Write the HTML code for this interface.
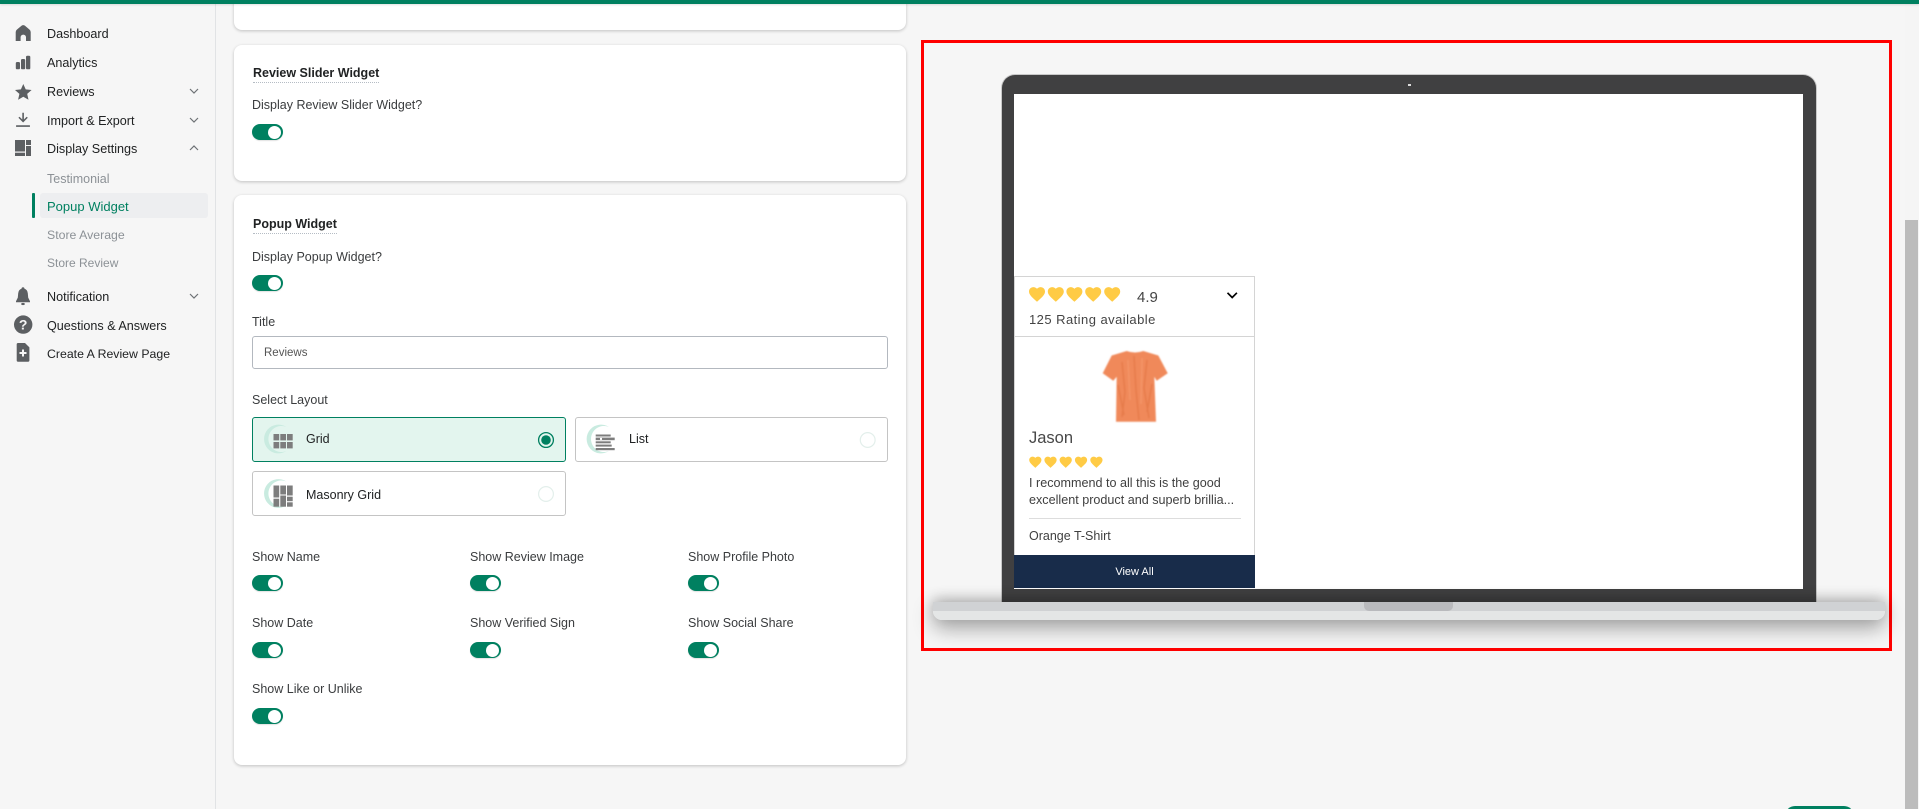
<!DOCTYPE html>
<html><head><meta charset="utf-8"><title>Popup Widget</title>
<style>
html,body{margin:0;padding:0;width:1919px;height:809px;overflow:hidden;background:#f6f6f6;font-family:"Liberation Sans",sans-serif;font-size:13px;color:#202223}
#w{position:relative;width:1919px;height:809px;overflow:hidden;background:#f6f6f6}
.a{position:absolute}
.t{position:absolute;white-space:nowrap;line-height:16px}
.n{left:47px;color:#202223;font-size:12.6px}
.s{left:47px;color:#8c9196}
.card{position:absolute;left:234px;width:672px;background:#fff;border-radius:8px;box-shadow:0 1px 3px rgba(0,0,0,.22)}
.h{left:253px;font-weight:bold;font-size:12.5px;color:#202223;border-bottom:1px dotted #b5bcc4;line-height:15px;padding-bottom:1px}
.l{color:#3a3c3e;font-size:12.5px}
.tg{position:absolute;width:31px;height:16px;background:#008060;border-radius:8px;box-shadow:0 1px 1px rgba(0,0,0,.12)}
.tg:after{content:"";position:absolute;left:16px;top:1.5px;width:13px;height:13px;border-radius:50%;background:#fff}
.opt{position:absolute;box-sizing:border-box;height:45px;background:#fff;border:1px solid #c4c4c4;border-radius:3px}
</style></head><body><div id="w">

<div class="a" style="left:215px;top:0;width:1px;height:809px;background:#e1e3e5"></div>
<div class="a" style="left:40px;top:193px;width:168px;height:25px;background:#edeef0;border-radius:3px"></div>
<div class="a" style="left:32px;top:193px;width:3px;height:25px;background:#008060;border-radius:1px"></div>

<div class="t n" style="top:26px">Dashboard</div>
<div class="t n" style="top:55px">Analytics</div>
<div class="t n" style="top:84px">Reviews</div>
<div class="t n" style="top:113px">Import &amp; Export</div>
<div class="t n" style="top:141px">Display Settings</div>
<div class="t s" style="top:171px;font-size:12.5px">Testimonial</div>
<div class="t" style="left:47px;top:199px;color:#008060;font-size:13px">Popup Widget</div>
<div class="t s" style="top:227px;font-size:12.3px">Store Average</div>
<div class="t s" style="top:255px;font-size:12px">Store Review</div>
<div class="t n" style="top:289px">Notification</div>
<div class="t n" style="top:318px">Questions &amp; Answers</div>
<div class="t n" style="top:346px;font-size:12.3px">Create A Review Page</div>

<div class="card" style="top:-20px;height:50px"></div>
<div class="card" style="top:45px;height:136px"></div>
<div class="card" style="top:195px;height:570px"></div>

<div class="t h" style="top:66px">Review Slider Widget</div>
<div class="t l" style="left:252px;top:97px">Display Review Slider Widget?</div>
<div class="tg" style="left:252px;top:124px"></div>

<div class="t h" style="top:217px">Popup Widget</div>
<div class="t l" style="left:252px;top:249px">Display Popup Widget?</div>
<div class="tg" style="left:252px;top:275px"></div>

<div class="t l" style="left:252px;top:314px">Title</div>
<div class="a" style="left:252px;top:336px;width:636px;height:33px;box-sizing:border-box;border:1px solid #b3b8bf;border-radius:3px;background:#fff"></div>
<div class="t" style="left:264px;top:345px;font-size:11.5px;color:#555">Reviews</div>

<div class="t l" style="left:252px;top:392px">Select Layout</div>
<div class="opt" style="left:252px;top:417px;width:314px;background:#e3f5ee;border-color:#008060"></div>
<div class="opt" style="left:575px;top:417px;width:313px"></div>
<div class="opt" style="left:252px;top:471px;width:314px"></div>
<div class="t" style="left:306px;top:431px;font-size:12.5px">Grid</div>
<div class="t" style="left:629px;top:431px;font-size:12.5px">List</div>
<div class="t" style="left:306px;top:487px;font-size:12.5px">Masonry Grid</div>

<div class="t l" style="left:252px;top:549px">Show Name</div>
<div class="t l" style="left:470px;top:549px">Show Review Image</div>
<div class="t l" style="left:688px;top:549px">Show Profile Photo</div>
<div class="tg" style="left:252px;top:575px"></div>
<div class="tg" style="left:470px;top:575px"></div>
<div class="tg" style="left:688px;top:575px"></div>
<div class="t l" style="left:252px;top:615px">Show Date</div>
<div class="t l" style="left:470px;top:615px">Show Verified Sign</div>
<div class="t l" style="left:688px;top:615px">Show Social Share</div>
<div class="tg" style="left:252px;top:642px"></div>
<div class="tg" style="left:470px;top:642px"></div>
<div class="tg" style="left:688px;top:642px"></div>
<div class="t l" style="left:252px;top:681px">Show Like or Unlike</div>
<div class="tg" style="left:252px;top:708px"></div>

<!-- red box -->
<div class="a" style="left:921px;top:40px;width:971px;height:611px;box-sizing:border-box;border:3px solid #f00"></div>

<!-- laptop -->
<div class="a" style="left:1001px;top:74px;width:816px;height:528px;box-sizing:border-box;background:#404041;border:1px solid #c8c8c8;border-bottom:0;border-radius:14px 14px 0 0"></div>
<div class="a" style="left:1408px;top:84px;width:3px;height:2px;background:#ddd"></div>
<div class="a" style="left:1014px;top:94px;width:789px;height:495px;background:#fff"></div>

<!-- popup -->
<div class="a" style="left:1014px;top:276px;width:241px;height:312px;box-sizing:border-box;border:1px solid #d4d4d4;background:#fff"></div>
<div class="a" style="left:1015px;top:336px;width:239px;height:1px;background:#d4d4d4"></div>
<div class="t" style="left:1137px;top:290px;font-size:15px;color:#444">4.9</div>
<div class="t" style="left:1029px;top:312px;font-size:13px;color:#444;letter-spacing:.45px">125 Rating available</div>
<div class="t" style="left:1029px;top:428px;font-size:16.5px;line-height:20px;color:#484848">Jason</div>
<div class="t" style="left:1029px;top:475px;font-size:12.6px;color:#3f3f3f">I recommend to all this is the good</div>
<div class="t" style="left:1029px;top:492px;font-size:12.6px;color:#3f3f3f">excellent product and superb brillia...</div>
<div class="a" style="left:1029px;top:518px;width:212px;height:1px;background:#ddd"></div>
<div class="t" style="left:1029px;top:528px;font-size:12.5px;color:#3f3f3f">Orange T-Shirt</div>
<div class="a" style="left:1014px;top:555px;width:241px;height:33px;background:#182c4a"></div>
<div class="t" style="left:1014px;top:564px;width:241px;text-align:center;font-size:11px;color:#fff">View All</div>

<!-- base -->
<div class="a" style="left:933px;top:602px;width:952px;height:18px;background:linear-gradient(#d0d2d4 0 9px,#e4e6e6 9px);border-radius:0 0 9px 9px;box-shadow:0 8px 20px rgba(0,0,0,.36),0 -3px 14px rgba(0,0,0,.24)"></div>
<div class="a" style="left:1364px;top:602px;width:89px;height:9px;background:#b9babd;border-radius:0 0 5px 5px"></div>

<!-- scrollbar -->
<div class="a" style="left:1905px;top:0;width:14px;height:809px;background:#f5f5f5"></div>
<div class="a" style="left:1905px;top:220px;width:13px;height:589px;background:#bcbcbc"></div>
<!-- save -->
<div class="a" style="left:1785px;top:806px;width:69px;height:20px;background:#008060;border-radius:10px"></div>
<!-- top bar -->
<div class="a" style="left:0;top:0;width:1919px;height:4px;background:#008060;box-shadow:0 1px 2px rgba(0,0,0,.12)"></div>

<svg class="a" style="left:0;top:0" width="1919" height="809" viewBox="0 0 1919 809">
<defs>
<path id="hrt" d="M12 21.35l-1.45-1.32C5.4 15.36 2 12.28 2 8.5 2 5.42 4.42 3 7.5 3c1.74 0 3.41.81 4.5 2.09C13.09 3.81 14.76 3 16.5 3 19.58 3 22 5.42 22 8.5c0 3.78-3.4 6.86-8.55 11.54L12 21.35z" fill="#ffcb45"/>
<path id="cres" d="M8-12A14.4 14.4 0 1 0 8 12A13 13 0 1 1 8-12Z" fill="#c9ebe0"/>
<filter id="b" x="-10%" y="-10%" width="120%" height="120%"><feGaussianBlur stdDeviation=".7"/></filter>
</defs>
<!-- sidebar icons -->
<g fill="#5c5f62">
<path d="M15.7 41V32Q15.7 30.5 17 29.5L21.5 25.7Q23.2 24.6 25 25.7L29.4 29.5Q30.7 30.5 30.7 32V41H26V37.3A2.7 2.7 0 0 0 20.6 37.3V41Z"/>
<rect x="15.8" y="62" width="4.2" height="7.3" rx="1.3"/><rect x="21" y="59" width="4.2" height="10.3" rx="1.3"/><rect x="26" y="55.7" width="4.3" height="13.6" rx="1.3"/>
<path d="M23.3 84l2.4 5.4 5.9.6-4.4 3.9 1.3 5.8-5.2-3-5.2 3 1.3-5.8L15 90l5.9-.6z"/>
<path d="M22.3 112.7h1.6v6.8l2.8-2.8 1.1 1.1-4.7 4.7-4.7-4.7 1.1-1.1 2.8 2.8z"/><rect x="16" y="125.3" width="14" height="1.6" rx=".5"/>
<rect x="15" y="140" width="10" height="11.5"/><rect x="26" y="140" width="5" height="5"/><rect x="15" y="152.7" width="10" height="3.3"/><rect x="26" y="146" width="5" height="10"/>
<path d="M23 287.2q1.4 0 1.5 1.5 3 1 3.3 4.6l.4 4.3 1.8 3.6v1H16v-1l1.8-3.6.4-4.3q.3-3.6 3.3-4.6.1-1.5 1.5-1.5z"/><ellipse cx="23" cy="304" rx="1.8" ry="1.1"/>
<circle cx="23.2" cy="324.6" r="9.2"/>
<path d="M18 343H25L29.4 347.4V360.4Q29.4 361.7 28 361.7H18Q16.7 361.7 16.7 360.4V344.3Q16.7 343 18 343Z"/>
</g>
<path d="M23 349.5v7M19.5 353h7" stroke="#f6f6f6" stroke-width="2" fill="none"/>
<text x="23.2" y="329.6" font-family="Liberation Sans" font-weight="bold" font-size="14" fill="#f6f6f6" text-anchor="middle">?</text>
<g fill="none" stroke="#6d7175" stroke-width="1.2">
<path d="M190 89l4 4 4-4M190 118l4 4 4-4M190 150l4-4 4 4M190 294l4 4 4-4"/>
</g>
<!-- layout icons -->
<use href="#cres" x="278.4" y="439"/><use href="#cres" x="601" y="439"/><use href="#cres" x="278.4" y="493.5"/>
<g fill="#7d7d7d">
<rect x="273.5" y="434" width="5.7" height="6.4"/><rect x="280.3" y="434" width="5.7" height="6.4"/><rect x="287" y="434" width="5.7" height="6.4"/>
<rect x="273.5" y="442" width="5.7" height="6.4"/><rect x="280.3" y="442" width="5.7" height="6.4"/><rect x="287" y="442" width="5.7" height="6.4"/>
<rect x="595.7" y="434.5" width="15" height="2"/><rect x="595.7" y="437.6" width="19" height="2.6"/><rect x="595.7" y="441.3" width="15" height="2"/><rect x="595.7" y="444.6" width="16" height="2"/><rect x="595.7" y="448" width="19" height="2.2"/>
<rect x="273.5" y="485.5" width="5.7" height="12"/><rect x="280.3" y="485.5" width="5.7" height="9"/><rect x="287" y="485.5" width="5.7" height="10"/>
<rect x="273.5" y="498.7" width="5.7" height="8"/><rect x="280.3" y="495.5" width="5.7" height="11.2"/><rect x="287" y="496.7" width="5.7" height="4.5"/><rect x="287" y="502.3" width="5.7" height="4.4"/>
</g>
<rect x="600" y="437.9" width="2" height="2" fill="#fff"/>
<circle cx="546" cy="440" r="7.4" fill="none" stroke="#008060" stroke-width="1.3"/><circle cx="546" cy="440" r="4.8" fill="#008060"/>
<circle cx="867.7" cy="440" r="7.4" fill="#fff" stroke="#e3efeb" stroke-width="1.2"/>
<circle cx="546" cy="494" r="7.4" fill="#fff" stroke="#e3efeb" stroke-width="1.2"/>
<!-- big hearts -->
<g transform="translate(1027.4 284.7) scale(.8)"><use href="#hrt"/></g>
<g transform="translate(1046.2 284.7) scale(.8)"><use href="#hrt"/></g>
<g transform="translate(1064.8 284.7) scale(.8)"><use href="#hrt"/></g>
<g transform="translate(1083.6 284.7) scale(.8)"><use href="#hrt"/></g>
<g transform="translate(1102.6 284.7) scale(.8)"><use href="#hrt"/></g>
<!-- small hearts -->
<g transform="translate(1028 454.8) scale(.61)"><use href="#hrt"/></g>
<g transform="translate(1043.2 454.8) scale(.61)"><use href="#hrt"/></g>
<g transform="translate(1058.4 454.8) scale(.61)"><use href="#hrt"/></g>
<g transform="translate(1073.7 454.8) scale(.61)"><use href="#hrt"/></g>
<g transform="translate(1089.1 454.8) scale(.61)"><use href="#hrt"/></g>
<path d="M1227.5 292.8l4.7 4.7 4.7-4.7" fill="none" stroke="#000" stroke-width="1.7"/>
<!-- shirt -->
<g filter="url(#b)">
<path d="M1126.7 351Q1135 354 1143.3 351L1158.3 355.5 1167.7 373.3 1156.7 380.7 1154.3 376.7 1156 421.7H1116L1116.7 376.7 1113.3 380.7 1102.7 373.3 1111.7 355.5Z" fill="#f0895a"/>
<path d="M1122 362l3 30-3 25M1134 356l2 34 3 30M1147 360l-3 28 5 30M1118 385l6 30M1152 384l-5 28" fill="none" stroke="#dc6d3c" stroke-width="1.5" opacity=".5"/>
<path d="M1128 360l2 40M1142 358l-1 46" fill="none" stroke="#f7a075" stroke-width="1.6" opacity=".5"/>
</g>
</svg>
</div></body></html>
